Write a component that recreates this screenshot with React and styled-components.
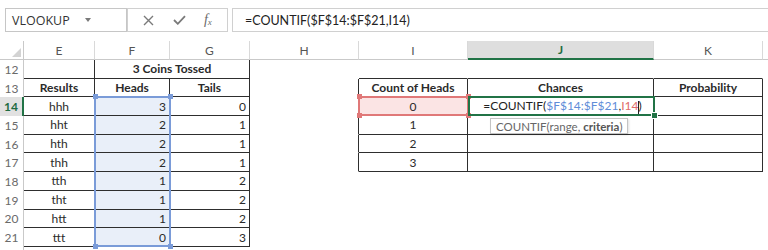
import React from "react";
import styled, { createGlobalStyle } from "styled-components";

const GlobalStyle = createGlobalStyle`
  body {
    margin: 0;
    background: #ffffff;
    font-family: Lato, "Open Sans", sans-serif;
  }
`;

const COLS = ["E", "F", "G", "H", "I", "J", "K", "L"];
const ROW_H = 18.7;
const HEAD_H = 19;

const results = ["hhh", "hht", "hth", "thh", "tth", "tht", "htt", "ttt"];
const heads = [3, 2, 2, 2, 1, 1, 1, 0];
const tails = [0, 1, 1, 1, 2, 2, 2, 3];

const Page = styled.div`
  width: 768px;
  height: 250px;
  overflow: hidden;
  background: #fff;
`;

const FormulaBar = styled.div`
  display: flex;
  align-items: stretch;
  height: 24px;
  padding: 8px 0 0 5px;
  margin-bottom: 9px;
`;

const NameBox = styled.div`
  width: 122px;
  box-sizing: border-box;
  border: 1px solid #c6c6c6;
  display: flex;
  align-items: center;
  padding: 0 6px;
  font-family: "Open Sans", sans-serif;
  font-size: 12.5px;
  color: #333;
  justify-content: space-between;
`;

const Caret = styled.span`
  width: 0;
  height: 0;
  border-left: 3px solid transparent;
  border-right: 3px solid transparent;
  border-top: 4px solid #7a7a7a;
  margin-right: 29px;
`;

const Grip = styled.div`
  width: 0;
  display: flex;
  align-items: center;
  justify-content: center;
  margin-left: -16px;
  margin-right: 16px;
`;

const Tools = styled.div`
  width: 101px;
  box-sizing: border-box;
  border: 1px solid #d0d0d0;
  display: flex;
  align-items: center;
  justify-content: space-around;
  padding: 0 6px;
  color: #7a7a7a;
`;

const Fx = styled.span`
  font-family: "Liberation Serif", serif;
  font-style: italic;
  font-size: 14px;
  color: #6a6a6a;
  sub {
    font-size: 9px;
    vertical-align: -1px;
  }
`;

const Input = styled.div`
  flex: 1;
  margin-left: 4px;
  box-sizing: border-box;
  border: 1px solid #d0d0d0;
  border-right: none;
  display: flex;
  align-items: center;
  padding-left: 12px;
  font-size: 12.5px;
  color: #222;
`;

const Sheet = styled.div`
  position: relative;
  display: grid;
  grid-template-columns: 24px 71px 75px 80px 109px 109px 186px 109px 1fr;
  grid-template-rows: ${HEAD_H}px;
  grid-auto-rows: ${ROW_H}px;
  font-size: 12px;
  color: #262626;
`;

const Corner = styled.div`
  border-right: 1px solid #c9c9c9;
  border-bottom: 1px solid #c9c9c9;
  display: flex;
  align-items: flex-end;
  justify-content: flex-end;
  padding: 0 2px 2px 0;
  box-sizing: border-box;
`;

const ColHead = styled.div`
  box-sizing: border-box;
  display: flex;
  align-items: center;
  justify-content: center;
  color: ${(p) => (p.$active ? "#1e6b41" : "#555")};
  font-weight: ${(p) => (p.$active ? 700 : 400)};
  background: ${(p) => (p.$active ? "#dedede" : "#fff")};
  border-right: 1px solid #d9d9d9;
  border-bottom: ${(p) => (p.$active ? "2px solid #217346" : "1px solid #c9c9c9")};
`;

const RowHead = styled.div`
  box-sizing: border-box;
  display: flex;
  align-items: center;
  justify-content: center;
  color: ${(p) => (p.$active ? "#1e6b41" : "#6a6a6a")};
  font-weight: ${(p) => (p.$active ? 700 : 400)};
  background: ${(p) => (p.$active ? "#e1e1e1" : "#fff")};
  border-right: ${(p) => (p.$active ? "2px solid #217346" : "1px solid #c9c9c9")};
`;

const Cell = styled.div`
  box-sizing: border-box;
  display: flex;
  align-items: center;
  justify-content: ${(p) =>
    p.$align === "right" ? "flex-end" : p.$align === "left" ? "flex-start" : "center"};
  padding: 0 3px;
  grid-column: span ${(p) => p.$span || 1};
  font-weight: ${(p) => (p.$bold ? 700 : 400)};
  background: ${(p) => p.$bg || "transparent"};
  border-right: 1px solid ${(p) => (p.$br ? "#2e2e2e" : "transparent")};
  border-bottom: 1px solid ${(p) => (p.$bb ? "#2e2e2e" : "transparent")};
  white-space: nowrap;
  color: #2a2a2a;
`;

const FormulaText = styled.span`
  font-size: 12px;
  color: #222;
  margin-left: 4px;
`;

const Range = styled.div`
  position: absolute;
  box-sizing: border-box;
  border: 2px solid ${(p) => p.$color};
  pointer-events: none;
`;

const Handle = styled.span`
  position: absolute;
  width: 5px;
  height: 5px;
  background: ${(p) => p.$color};
  ${(p) => (p.$outline ? "outline: 1px solid #fff;" : "")}
`;

const Tip = styled.div`
  position: absolute;
  left: 490px;
  top: 77px;
  height: 16px;
  box-sizing: border-box;
  padding: 0 5px;
  display: flex;
  align-items: center;
  border: 1px solid #c4c4c4;
  background: #fff;
  box-shadow: 1px 1px 2px rgba(0, 0, 0, 0.12);
  font-size: 11.5px;
  color: #666;
  b {
    font-weight: 700;
    color: #555;
  }
`;

const Ref = styled.span`
  color: ${(p) => p.$color};
`;

const TextCaret = styled.span`
  display: inline-block;
  width: 1px;
  height: 13px;
  background: #222;
  margin-right: -1px;
  vertical-align: middle;
`;

const colLeft = { E: 24, F: 95, G: 170, H: 250, I: 359, J: 468, K: 654 };
const rowTop = (r) => HEAD_H + (r - 12) * ROW_H;

function Corners({ x, y, w, h, color }) {
  const pts = [
    [x, y],
    [x + w, y],
    [x, y + h],
    [x + w, y + h],
  ];
  return pts.map(([px, py], i) => (
    <Handle key={i} $color={color} style={{ left: px - 2.5, top: py - 2.5 }} />
  ));
}

function rowCells(n) {
  const c = {};
  COLS.forEach((k) => (c[k] = {}));
  if (n === 12) {
    c.E = { br: true, bb: true };
    c.F = { text: "3 Coins Tossed", bold: true, span: 2, br: true, bb: true };
    c.G = null;
    c.I = { bb: true };
    c.J = { bb: true };
    c.K = { bb: true };
  }
  if (n === 13) {
    c.E = { text: "Results", bold: true, br: true, bb: true };
    c.F = { text: "Heads", bold: true, br: true, bb: true };
    c.G = { text: "Tails", bold: true, br: true, bb: true };
    c.H = { br: true };
    c.I = { text: "Count of Heads", bold: true, br: true, bb: true };
    c.J = { text: "Chances", bold: true, br: true, bb: true };
    c.K = { text: "Probability", bold: true, br: true, bb: true };
  }
  if (n >= 14 && n <= 21) {
    const i = n - 14;
    c.E = { text: results[i], br: true, bb: true };
    c.F = { text: heads[i], align: "right", br: true, bb: true, bg: "#e9eff9" };
    c.G = { text: tails[i], align: "right", br: true, bb: true };
  }
  if (n >= 14 && n <= 17) {
    c.H = { br: true };
    c.I = { text: n - 14, br: true, bb: true, bg: n === 14 ? "#fbe4e4" : undefined };
    c.J = { br: true, bb: true, formula: n === 14 };
    c.K = { br: true, bb: true };
  }
  return c;
}

function Formula() {
  return (
    <FormulaText>
      =COUNTIF(<Ref $color="#5f8dd8">$F$14:$F$21</Ref>,<Ref $color="#e06a6a">I14</Ref>
      <TextCaret />)
    </FormulaText>
  );
}

export default function App() {
  const rows = [12, 13, 14, 15, 16, 17, 18, 19, 20, 21, 22];
  const blue = "#7a9bd8";
  const red = "#e07878";
  const green = "#217346";
  return (
    <Page>
      <GlobalStyle />
      <FormulaBar>
        <NameBox>
          VLOOKUP
          <Caret />
        </NameBox>
        <Grip>
          <svg width="3" height="12" viewBox="0 0 3 12">
            <circle cx="1.5" cy="1.5" r="1" fill="#b8b8b8" />
            <circle cx="1.5" cy="6" r="1" fill="#b8b8b8" />
            <circle cx="1.5" cy="10.5" r="1" fill="#b8b8b8" />
          </svg>
        </Grip>
        <Tools>
          <svg width="11" height="11" viewBox="0 0 11 11">
            <path d="M1 1 L10 10 M10 1 L1 10" stroke="#7a7a7a" strokeWidth="1.4" />
          </svg>
          <svg width="13" height="10" viewBox="0 0 13 10">
            <path d="M1 5 L4.8 8.8 L12 1.2" stroke="#7a7a7a" strokeWidth="1.8" fill="none" />
          </svg>
          <Fx>
            f<sub>x</sub>
          </Fx>
        </Tools>
        <Input>=COUNTIF($F$14:$F$21,I14)</Input>
      </FormulaBar>

      <Sheet>
        <Corner>
          <svg width="9" height="9" viewBox="0 0 9 9">
            <path d="M9 0 L9 9 L0 9 Z" fill="#d3d3d3" />
          </svg>
        </Corner>
        {COLS.map((k) => (
          <ColHead key={k} $active={k === "J"}>
            {k === "L" ? "" : k}
          </ColHead>
        ))}

        {rows.map((n) => {
          const cells = rowCells(n);
          return (
            <React.Fragment key={n}>
              <RowHead $active={n === 14}>{n === 22 ? "" : n}</RowHead>
              {COLS.map((k) => {
                const c = cells[k];
                if (c === null) return null;
                return (
                  <Cell
                    key={k}
                    $align={c.align}
                    $bold={c.bold}
                    $span={c.span}
                    $br={c.br}
                    $bb={c.bb}
                    $bg={c.bg}
                  >
                    {c.formula ? <Formula /> : c.text}
                  </Cell>
                );
              })}
            </React.Fragment>
          );
        })}

        <Range
          $color={blue}
          style={{ left: colLeft.F - 1, top: rowTop(14) - 1, width: 77, height: 8 * ROW_H + 1 }}
        />
        <Corners x={colLeft.F} y={rowTop(14) - 0.5} w={75} h={8 * ROW_H} color={blue} />

        <Range
          $color={red}
          style={{ left: colLeft.I - 1, top: rowTop(14) - 1, width: 111, height: ROW_H + 1 }}
        />
        <Corners x={colLeft.I} y={rowTop(14) - 0.5} w={109} h={ROW_H} color={red} />

        <Range
          $color={green}
          style={{ left: colLeft.J, top: rowTop(14) - 1, width: 187, height: ROW_H + 1 }}
        />
        <Handle $color={green} $outline style={{ left: colLeft.K - 2, top: rowTop(15) - 3 }} />

        <Tip>
          COUNTIF(range,&nbsp;<b>criteria</b>)
        </Tip>
      </Sheet>
    </Page>
  );
}
